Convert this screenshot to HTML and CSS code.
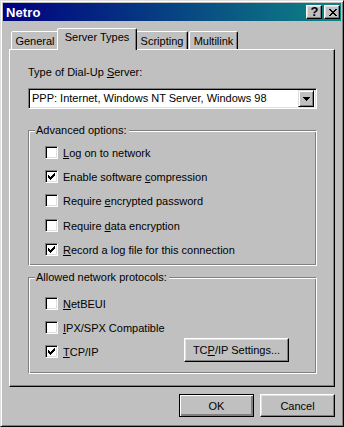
FILE: index.html
```html
<!DOCTYPE html>
<html>
<head>
<meta charset="utf-8">
<link rel="stylesheet" href="styles.css">
</head>
<body>
<div class="window">
  <div class="titlebar">
    <span class="title">Netro</span>
    <div class="tbtns">
      <div class="tbtn help">?</div>
      <div class="tbtn close">
        <svg width="8" height="7" viewBox="0 0 8 7" shape-rendering="crispEdges"><path d="M0 0h2v1h-2zM6 0h2v1h-2zM1 1h2v1h-2zM5 1h2v1h-2zM2 2h4v1h-4zM3 3h2v1h-2zM2 4h4v1h-4zM1 5h2v1h-2zM5 5h2v1h-2zM0 6h2v1h-2zM6 6h2v1h-2z" fill="#000"/></svg>
      </div>
    </div>
  </div>
  <div class="body">
    <div class="tabs">
      <div class="tab t1">General</div>
      <div class="tab t2 sel">Server Types</div>
      <div class="tab t3">Scripting</div>
      <div class="tab t4">Multilink</div>
    </div>
    <div class="panel">
      <div class="lbl">Type of Dial-Up <u>S</u>erver:</div>
      <div class="combo">
        <span class="ctext">PPP: Internet, Windows NT Server, Windows 98</span>
        <div class="cbtn"><svg width="7" height="4" viewBox="0 0 7 4" shape-rendering="crispEdges"><path d="M0 0h7v1h-7zM1 1h5v1h-5zM2 2h3v1h-3zM3 3h1v1h-1z" fill="#000"/></svg></div>
      </div>
      <div class="group g1">
        <div class="legend">Advanced options:</div>
        <div class="rows">
          <div class="row"><span class="cb"></span><span><u>L</u>og on to network</span></div>
          <div class="row"><span class="cb on"><svg width="13" height="13" viewBox="0 0 13 13" shape-rendering="crispEdges"><path d="M3 5h1v3h-1zM4 6h1v3h-1zM5 7h1v3h-1zM6 6h1v3h-1zM7 5h1v3h-1zM8 4h1v3h-1zM9 3h1v3h-1z" fill="#000"/></svg></span><span>Enable software <u>c</u>ompression</span></div>
          <div class="row"><span class="cb"></span><span>Require <u>e</u>ncrypted password</span></div>
          <div class="row r4"><span class="cb"></span><span>Require <u>d</u>ata encryption</span></div>
          <div class="row"><span class="cb on"><svg width="13" height="13" viewBox="0 0 13 13" shape-rendering="crispEdges"><path d="M3 5h1v3h-1zM4 6h1v3h-1zM5 7h1v3h-1zM6 6h1v3h-1zM7 5h1v3h-1zM8 4h1v3h-1zM9 3h1v3h-1z" fill="#000"/></svg></span><span><u>R</u>ecord a log file for this connection</span></div>
        </div>
      </div>
      <div class="group g2">
        <div class="legend">Allowed network protocols:</div>
        <div class="rows">
          <div class="row"><span class="cb"></span><span><u>N</u>etBEUI</span></div>
          <div class="row"><span class="cb"></span><span><u>I</u>PX/SPX Compatible</span></div>
          <div class="row last"><span class="cb on"><svg width="13" height="13" viewBox="0 0 13 13" shape-rendering="crispEdges"><path d="M3 5h1v3h-1zM4 6h1v3h-1zM5 7h1v3h-1zM6 6h1v3h-1zM7 5h1v3h-1zM8 4h1v3h-1zM9 3h1v3h-1z" fill="#000"/></svg></span><span><u>T</u>CP/IP</span>
            <div class="btn tcpbtn">TC<u>P</u>/IP Settings...</div>
          </div>
        </div>
      </div>
    </div>
    <div class="footer">
      <div class="btn def">OK</div>
      <div class="btn">Cancel</div>
    </div>
  </div>
</div>
</body>
</html>
```

FILE: styles.css
```css
* { box-sizing: border-box; }
html, body { margin: 0; padding: 0; background: #c0c0c0; }
body {
  font-family: "Liberation Sans", Arial, sans-serif;
  font-size: 11px;
  color: #000;
}
u { text-decoration: underline; text-underline-offset: 1px; }
.window {
  width: 344px;
  height: 427px;
  background: #c0c0c0;
  border: 1px solid;
  border-color: #dfdfdf #000 #000 #dfdfdf;
  box-shadow: inset 1px 1px #fff, inset -1px -1px #808080;
  padding: 2px;
  display: flex;
  flex-direction: column;
}
.titlebar {
  height: 18px;
  background: linear-gradient(to right, #000080, #0e8585);
  display: flex;
  align-items: center;
  justify-content: space-between;
  padding: 0 1px 0 3px;
}
.title {
  color: #fff;
  font-weight: bold;
  font-size: 13px;
  letter-spacing: 0.1px;
}
.tbtns { display: flex; gap: 2px; }
.tbtn {
  width: 16px;
  height: 14px;
  background: #c0c0c0;
  border: 1px solid;
  border-color: #fff #000 #000 #fff;
  box-shadow: inset -1px -1px #808080, inset 1px 1px #dfdfdf;
  display: flex;
  align-items: center;
  justify-content: center;
}
.help {
  font-weight: bold;
  font-size: 13px;
  line-height: 12px;
  padding-left: 1px;
}
.close svg { display: block; margin-left: 1px; margin-top: 1px; }
.body {
  flex: 1;
  padding: 7px 6px 7px 6px;
  display: flex;
  flex-direction: column;
}
.tabs {
  display: flex;
  align-items: flex-end;
  height: 21px;
  padding-left: 2px;
  position: relative;
  z-index: 2;
}
.tab {
  height: 18px;
  border: 1px solid;
  border-bottom: none;
  border-color: #fff #000 transparent #fff;
  box-shadow: inset -1px 0 #808080;
  border-radius: 2px 2px 0 0;
  padding: 3px 0 0 0;
  text-align: center;
  font-size: 11px;
  background: #c0c0c0;
}
.t1 { width: 48px; }
.t2 { width: 80px; }
.t3 { width: 52px; }
.t4 { width: 49px; }
.tab.sel {
  height: 22px;
  margin: 0 -2px -1px -2px;
  padding-top: 2px;
  position: relative;
  z-index: 3;
}
.t3 { margin-left: 1px; }
.t4 { margin-left: 1px; }
.panel {
  flex: 1;
  border: 1px solid;
  border-color: #fff #000 #000 #fff;
  box-shadow: inset -1px -1px #808080;
  padding: 16px 17px 0 18px;
  display: flex;
  flex-direction: column;
}
.lbl { height: 13px; line-height: 13px; }
.combo {
  margin-top: 9px;
  height: 21px;
  width: 289px;
  background: #fff;
  border: 1px solid;
  border-color: #808080 #fff #fff #808080;
  box-shadow: inset 1px 1px #000, inset -1px -1px #dfdfdf;
  display: flex;
  align-items: center;
  justify-content: space-between;
  padding: 2px;
}
.ctext {
  padding-left: 1px;
  line-height: 15px;
}
.cbtn {
  width: 16px;
  height: 17px;
  background: #c0c0c0;
  border: 1px solid;
  border-color: #dfdfdf #000 #000 #dfdfdf;
  box-shadow: inset 1px 1px #fff, inset -1px -1px #808080;
  display: flex;
  align-items: center;
  justify-content: center;
}
.cbtn svg { display: block; }
.group {
  position: relative;
  width: 289px;
  border: 1px solid;
  border-color: #808080 #fff #fff #808080;
  box-shadow: inset 1px 1px #fff, inset -1px -1px #808080;
}
.g1 { margin-top: 21px; height: 136px; }
.g2 { margin-top: 11px; height: 97px; }
.legend {
  position: absolute;
  top: -8px;
  left: 6px;
  background: #c0c0c0;
  padding: 0 2px 0 1px;
  line-height: 14px;
}
.rows {
  padding: 15px 0 0 16px;
  display: flex;
  flex-direction: column;
  gap: 11px;
}
.g2 .rows { padding-top: 19px; }
.r4 { margin-top: 1px; }
.row {
  display: flex;
  align-items: center;
  height: 13px;
  gap: 5px;
}
.cb {
  width: 13px;
  height: 13px;
  flex: none;
  background: #fff;
  border: 1px solid;
  border-color: #808080 #fff #fff #808080;
  box-shadow: inset 1px 1px #000, inset -1px -1px #dfdfdf;
  position: relative;
}
.cb svg { position: absolute; left: -1px; top: -1px; display: block; }
.btn {
  height: 23px;
  background: #c0c0c0;
  border: 1px solid;
  border-color: #fff #000 #000 #fff;
  box-shadow: inset -1px -1px #808080, inset 1px 1px #dfdfdf;
  display: flex;
  align-items: center;
  justify-content: center;
}
.tcpbtn {
  width: 105px;
  height: 24px;
  margin-left: auto;
  margin-right: 27px;
  margin-top: -3px;
}
.footer {
  display: flex;
  justify-content: flex-end;
  gap: 6px;
  padding-top: 7px;
  padding-right: 0;
}
.footer .btn { width: 75px; }
.btn.def {
  border: 1px solid #000;
  box-shadow: inset 1px 1px #fff, inset -1px -1px #808080, inset -2px -2px #808080;
}
```
